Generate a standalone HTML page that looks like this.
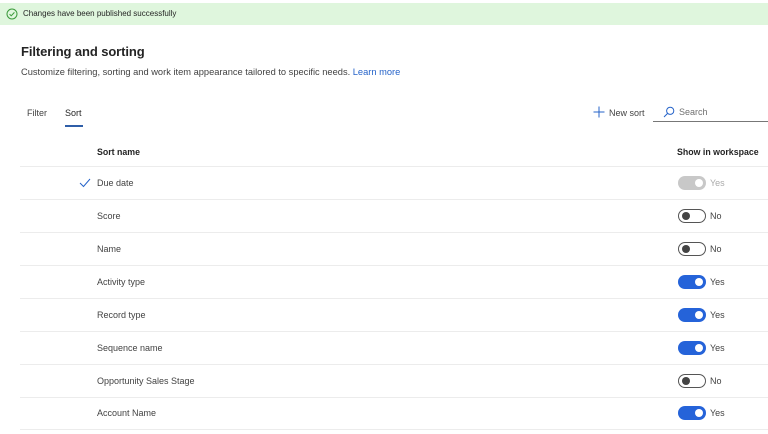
<!DOCTYPE html>
<html><head><meta charset="utf-8"><style>
*{margin:0;padding:0;box-sizing:border-box}
body{width:768px;height:434px;overflow:hidden;background:#fff;font-family:"Liberation Sans",sans-serif;color:#242424;position:relative}
.ban{position:absolute;left:0;top:3px;width:768px;height:22px;background:#dff6dd}
.ban span{position:absolute;left:23px;top:6px;font-size:8px;color:#242424}
.ban svg{position:absolute;left:6px;top:5px}
h1{position:absolute;left:21px;top:44px;font-size:13px;letter-spacing:-0.1px;font-weight:bold;color:#242424}
.sub{position:absolute;left:21px;top:67px;font-size:9.3px;color:#424242}
.sub a{color:#2563c9;text-decoration:none}
.tab{position:absolute;top:108px;font-size:9px;color:#424242}
.ul{position:absolute;left:65px;top:125px;width:18px;height:2px;background:#2f5ea8}
.ns{position:absolute;left:593px;top:106px;font-size:9px;color:#424242}
.sr{position:absolute;left:653px;top:102px;width:115px;height:20px;border-bottom:1px solid #777}
.sr span{position:absolute;left:26px;top:5px;font-size:9px;color:#707070}
.hd{position:absolute;top:147px;font-size:8.8px;font-weight:bold;color:#242424}
.line{position:absolute;left:20px;width:748px;height:1px;background:#ececec}
.nm{position:absolute;left:97px;font-size:9px;color:#424242}
.tg{position:absolute;left:678px;width:28px;height:14px;border-radius:7px}
.tg i{position:absolute;top:3px;width:8px;height:8px;border-radius:4px}
.on{background:#2563d9}.on i{right:3px;background:#fff}
.off{border:1px solid #555;background:#fff}.off i{left:3px;top:2px;background:#444}
.dis{background:#c8c8c8}.dis i{right:3px;background:#fff}
.lb{position:absolute;left:710px;font-size:9px;color:#424242}
</style></head><body>
<div class="ban"><svg width="12" height="12" viewBox="0 0 12 12"><circle cx="6" cy="6" r="5" fill="none" stroke="#3a9a3a" stroke-width="1"/><path d="M3.6 6.2l1.6 1.6 3.2-3.4" fill="none" stroke="#3a9a3a" stroke-width="1"/></svg><span>Changes have been published successfully</span></div>
<h1>Filtering and sorting</h1>
<div class="sub">Customize filtering, sorting and work item appearance tailored to specific needs. <a>Learn more</a></div>
<div class="tab" style="left:27px">Filter</div>
<div class="tab" style="left:65px;color:#242424">Sort</div>
<div class="ul"></div>
<div class="ns"><svg width="12" height="12" viewBox="0 0 12 12" style="vertical-align:-2px;margin-right:4px"><path d="M6 0.5v11M0.5 6h11" stroke="#2563c9" stroke-width="1"/></svg>New sort</div>
<div class="sr"><svg width="12" height="12" viewBox="0 0 12 12" style="position:absolute;left:10px;top:4px"><circle cx="7.2" cy="4.8" r="3.6" fill="none" stroke="#2563c9" stroke-width="1"/><path d="M4.6 7.4L1 11" stroke="#2563c9" stroke-width="1"/></svg><span>Search</span></div>
<div class="hd" style="left:97px">Sort name</div>
<div class="hd" style="left:677px">Show in workspace</div>
<div class="line" style="top:166px"></div>
<svg style="position:absolute;left:79px;top:178px" width="12" height="10" viewBox="0 0 12 10"><path d="M1 5l3.5 3.5L11 1" fill="none" stroke="#2563c9" stroke-width="1"/></svg>
<div class="nm" style="top:178px">Due date</div><div class="tg dis" style="top:176px"><i></i></div><div class="lb" style="top:178px;color:#aaa">Yes</div>
<div class="line" style="top:199px"></div>
<div class="nm" style="top:211px">Score</div><div class="tg off" style="top:209px"><i></i></div><div class="lb" style="top:211px">No</div>
<div class="line" style="top:232px"></div>
<div class="nm" style="top:244px">Name</div><div class="tg off" style="top:242px"><i></i></div><div class="lb" style="top:244px">No</div>
<div class="line" style="top:265px"></div>
<div class="nm" style="top:277px">Activity type</div><div class="tg on" style="top:275px"><i></i></div><div class="lb" style="top:277px">Yes</div>
<div class="line" style="top:298px"></div>
<div class="nm" style="top:310px">Record type</div><div class="tg on" style="top:308px"><i></i></div><div class="lb" style="top:310px">Yes</div>
<div class="line" style="top:331px"></div>
<div class="nm" style="top:343px">Sequence name</div><div class="tg on" style="top:341px"><i></i></div><div class="lb" style="top:343px">Yes</div>
<div class="line" style="top:364px"></div>
<div class="nm" style="top:376px">Opportunity Sales Stage</div><div class="tg off" style="top:374px"><i></i></div><div class="lb" style="top:376px">No</div>
<div class="line" style="top:397px"></div>
<div class="nm" style="top:408px">Account Name</div><div class="tg on" style="top:406px"><i></i></div><div class="lb" style="top:408px">Yes</div>
<div class="line" style="top:429px"></div>
</body></html>
